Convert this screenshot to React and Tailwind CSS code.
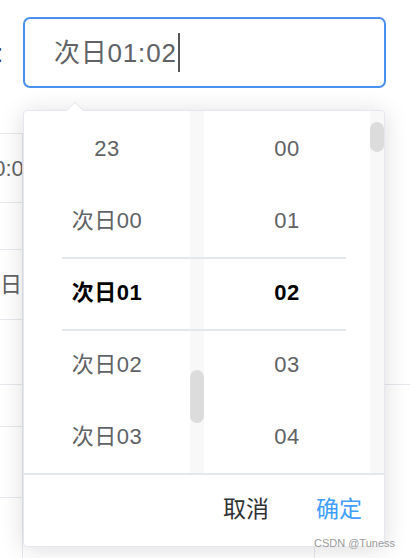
import React from "react";

const hours = ["23", "次日00", "次日01", "次日02", "次日03"];
const mins = ["00", "01", "02", "03", "04"];

function Column({ items, selected, thumbTop, thumbH }) {
  return (
    <div className="flex flex-1 h-full">
      <div className="flex-1 flex flex-col pt-[1px]">
        {items.map((t, i) => (
          <div
            key={t}
            className={
              "h-[72px] shrink-0 flex items-center justify-center text-[22px] tracking-[0.5px] " +
              (i === selected ? "font-bold text-black" : "text-[#606266]")
            }
          >
            {t}
          </div>
        ))}
      </div>
      <div className="w-[14px] h-full bg-[#f8f8f8] flex flex-col">
        <div style={{ height: thumbTop }} className="shrink-0" />
        <div style={{ height: thumbH }} className="w-full rounded-full bg-[#dcdcdc] shrink-0" />
      </div>
    </div>
  );
}

export default function App() {
  return (
    <div className="relative w-[410px] h-[558px] bg-white overflow-hidden font-['Liberation_Sans','Noto_Sans_CJK_SC',sans-serif]">
      {/* form row */}
      <div className="flex items-start h-[133px] pt-[17px]">
        <div className="w-[23px] h-[71px] overflow-hidden flex items-center">
          <span className="ml-[-4px] text-[26px] leading-none text-[#303133]">:</span>
        </div>
        <div className="w-[363px] h-[71px] rounded-[7px] border-2 border-[#4a90f0] flex items-center pl-[29px]">
          <span className="text-[26px] leading-none tracking-[0.8px] text-[#606266] whitespace-nowrap">次日01:02</span>
          <span className="w-[2px] h-[39px] bg-[#555] ml-[1px]" />
        </div>
      </div>

      {/* table beneath */}
      <div className="flex h-[425px]">
        <div className="w-[23px] border-r border-[#e6e8ee] flex flex-col overflow-hidden">
          <div className="h-[70px] border-y border-[#e6e8ee] flex items-center overflow-hidden">
            <span className="ml-[-19px] text-[22px] text-[#606266] whitespace-nowrap">00:00</span>
          </div>
          <div className="h-[47px] border-b border-[#e6e8ee]" />
          <div className="h-[70px] border-b border-[#e6e8ee] flex items-center">
            <span className="text-[22px] text-[#606266] whitespace-nowrap">日</span>
          </div>
          <div className="h-[65px] border-b border-[#e6e8ee]" />
          <div className="h-[42px] border-b border-[#e6e8ee]" />
          <div className="h-[71px] border-b border-[#e6e8ee]" />
        </div>
        <div className="flex-1">
          <div className="w-[292px] h-full border-r border-[#e6e8ee]" />
        </div>
        <div className="w-[25px] flex flex-col">
          <div className="h-[252px] border-b border-[#e6e8ee]" />
        </div>
      </div>

      {/* time picker popup */}
      <div className="absolute left-[23px] top-[110px] w-[362px] h-[437px] bg-white border border-[#e4e7ed] rounded-[4px] shadow-[0_2px_24px_rgba(0,0,0,0.14)] flex flex-col">
        <div className="absolute left-[45px] top-[-7px] w-[12px] h-[12px] rotate-45 bg-white border-l border-t border-[#e4e7ed]" />
        <div className="relative flex h-[362px] rounded-t-[4px] overflow-hidden">
          <Column items={hours} selected={2} thumbTop={259} thumbH={53} />
          <Column items={mins} selected={2} thumbTop={11} thumbH={30} />
          <div className="absolute left-[38px] right-[38px] top-[146px] h-[74px] border-y-2 border-[#e4e7ed] pointer-events-none" />
        </div>
        <div className="flex-1 border-t-2 border-[#e4e7ed] flex items-center justify-end gap-[47px] pr-[22px] pb-[2px]">
          <span className="text-[23px] text-[#303133]">取消</span>
          <span className="text-[23px] text-[#409eff]">确定</span>
        </div>
      </div>

      {/* watermark */}
      <div className="absolute right-[15px] bottom-[9px] text-[11px] leading-none text-[#9a9a9a] font-['Liberation_Sans',sans-serif]">
        CSDN @Tuness
      </div>
    </div>
  );
}
